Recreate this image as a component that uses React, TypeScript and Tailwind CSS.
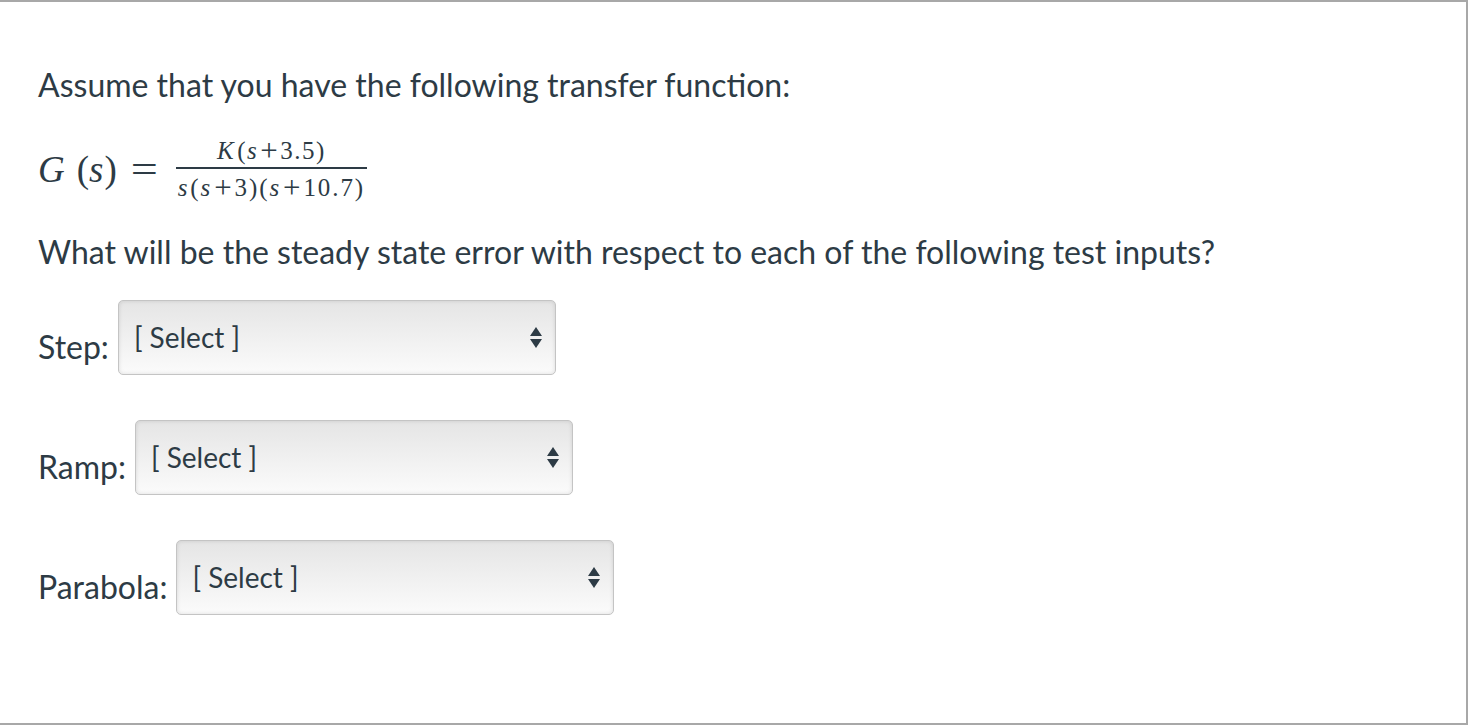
import React from "react";

function Arrows() {
  return (
    <svg width="12" height="21" viewBox="0 0 12 21" className="shrink-0">
      <polygon points="6,0 12,9 0,9" fill="#2d3b45" />
      <polygon points="0,12 12,12 6,21" fill="#2d3b45" />
    </svg>
  );
}

function SelectBox() {
  return (
    <div className="w-[438px] h-[75px] rounded-[5px] border border-[#c4c4c4] bg-gradient-to-b from-[#e5e5e5] to-[#fbfbfb] shadow-[inset_0_0_4px_rgba(0,0,0,0.12)] flex items-center justify-between pl-[15px] pr-[13px]">
      <span className="text-[28px] leading-none text-[#2d3b45] -mt-[1px]">[ Select ]</span>
      <Arrows />
    </div>
  );
}

function Row({ label, className }: { label: string; className?: string }) {
  return (
    <div className={"flex items-center " + (className ?? "")}>
      <span className="text-[32px] leading-none mt-[20px] mr-[9px]">{label}</span>
      <SelectBox />
    </div>
  );
}

function Plus() {
  return <span className="text-[31px] leading-[26px] mx-[1px] align-[-2px]">+</span>;
}

export default function App() {
  return (
    <div
      className="w-full h-[725px] bg-white border-t-2 border-r-2 border-b-2 border-[#a8a8a8] pl-[38px] pt-[65px] text-[#2d3b45]"
      style={{ fontFamily: "Lato, 'Open Sans', sans-serif" }}
    >
      <p className="text-[32px] leading-[36px]">Assume that you have the following transfer function:</p>
      <div
        className="flex items-center mt-[35px] text-[#2d3b45]"
        style={{ fontFamily: "'Liberation Serif', 'DejaVu Serif', serif" }}
      >
        <span className="text-[37px] leading-none">
          <i>G</i>
          <span className="ml-[12px]">(</span>
          <i className="mr-[1px]">s</i>
          <span>)</span>
        </span>
        <span className="text-[37px] leading-none ml-[17px] mr-[21px] inline-block scale-x-[1.3]">=</span>
        <span className="flex flex-col items-center">
          <span className="text-[25px] leading-[26px] px-[2px] tracking-[1.5px]">
            <i className="mr-[2px]">K</i>(<i className="mr-[1px]">s</i><Plus />3.5)
          </span>
          <span className="w-full h-[1.5px] bg-[#2d3b45] mt-[3px] mb-[6px]" />
          <span className="text-[25px] leading-[26px] px-[2px] tracking-[1.9px]">
            <i className="mr-[1px]">s</i>(<i className="mr-[1px]">s</i><Plus />3)(<i className="mr-[1px]">s</i><Plus />10.7)
          </span>
        </span>
      </div>
      <p className="text-[32px] leading-[36px] mt-[33px]">
        What will be the steady state error with respect to each of the following test inputs?
      </p>
      <Row label="Step:" className="mt-[30px]" />
      <Row label="Ramp:" className="mt-[45px]" />
      <Row label="Parabola:" className="mt-[45px]" />
    </div>
  );
}
